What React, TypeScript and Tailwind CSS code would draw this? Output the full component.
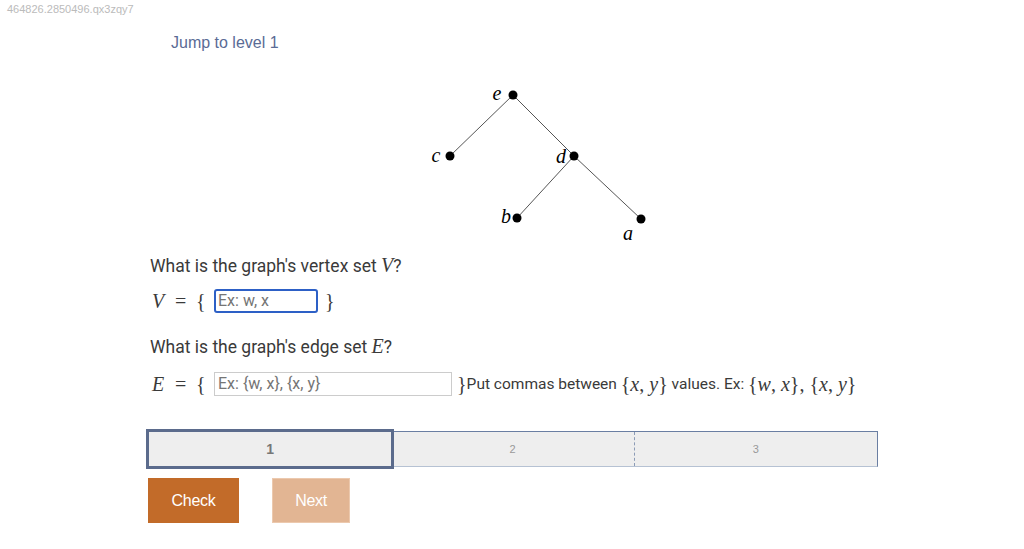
import React from "react";

const sans = { fontFamily: '"Liberation Sans", Arial, sans-serif' };
const roboto = { fontFamily: 'Roboto, "Liberation Sans", sans-serif' };
const serif = { fontFamily: '"Liberation Serif", "Times New Roman", serif' };

function M({ children, className = "" }: { children: React.ReactNode; className?: string }) {
  return (
    <span className={"text-[20px] " + className} style={serif}>
      {children}
    </span>
  );
}

function I({ children }: { children: React.ReactNode }) {
  return <span className="italic">{children}</span>;
}

export default function App() {
  return (
    <div className="min-h-[549px] bg-white text-[#3a3a3a]" style={roboto}>
      <div className="pl-[7px] pt-[3px] text-[11px] leading-[13px] text-[#bbbbbb]" style={sans}>
        464826.2850496.qx3zqy7
      </div>
      <div className="ml-[171px] mt-[17px] text-[16px] leading-[20px] text-[#5a6b95]" style={sans}>
        Jump to level 1
      </div>

      <svg width="240" height="170" className="block ml-[420px] mt-[27px]" style={serif}>
        <g stroke="#555555" strokeWidth="1">
          <line x1="93" y1="15" x2="30" y2="76" />
          <line x1="93" y1="15" x2="154" y2="76" />
          <line x1="154" y1="76" x2="97" y2="138" />
          <line x1="154" y1="76" x2="221" y2="139" />
        </g>
        <g fill="#000000">
          <circle cx="93" cy="15" r="4.5" />
          <circle cx="30" cy="76" r="4.5" />
          <circle cx="154" cy="76" r="4.5" />
          <circle cx="97" cy="138" r="4.5" />
          <circle cx="221" cy="139" r="4.5" />
        </g>
        <g fontSize="20" fontStyle="italic" fill="#000000" textAnchor="middle">
          <text x="77" y="20">e</text>
          <text x="16" y="82">c</text>
          <text x="141" y="83">d</text>
          <text x="86" y="143">b</text>
          <text x="208" y="160">a</text>
        </g>
      </svg>

      <div className="ml-[148px] pl-[2px]">
        <div className="mt-[3px] text-[17.5px] leading-[24px]">
          What is the graph's vertex set <M><I>V</I></M>?
        </div>
        <div className="mt-[11px] flex items-center h-[24px]">
          <M className="w-[23px] pl-[2px] leading-[24px]"><I>V</I></M>
          <M className="w-[23px] pl-[2px] leading-[24px]">=</M>
          <M className="w-[18px] leading-[24px]">{"{"}</M>
          <input
            placeholder="Ex: w, x"
            className="w-[104px] h-[24px] border-2 border-[#2d60c6] rounded-[3px] px-[2px] text-[16px] text-[#333] placeholder:text-[#757575] outline-none"
            style={roboto}
          />
          <M className="ml-[7px] leading-[24px]">{"}"}</M>
        </div>

        <div className="mt-[21px] text-[17.5px] leading-[24px]">
          What is the graph's edge set <M><I>E</I></M>?
        </div>
        <div className="mt-[13px] flex items-center h-[24px]">
          <M className="w-[23px] pl-[2px] leading-[24px]"><I>E</I></M>
          <M className="w-[23px] pl-[2px] leading-[24px]">=</M>
          <M className="w-[18px] leading-[24px]">{"{"}</M>
          <input
            placeholder="Ex: {w, x}, {x, y}"
            className="w-[238px] h-[24px] border border-[#cccccc] px-[3px] text-[16px] text-[#333] placeholder:text-[#757575] outline-none"
            style={roboto}
          />
          <M className="ml-[5px] leading-[24px]">{"}"}</M>
          <span className="text-[15.5px] leading-[24px] whitespace-pre">Put commas between </span>
          <M className="leading-[24px]">
            {"{"}<I>x</I>, <I>y</I>{"}"}
          </M>
          <span className="text-[15.5px] leading-[24px] whitespace-pre"> values. Ex: </span>
          <M className="leading-[24px]">
            {"{"}<I>w</I>, <I>x</I>{"}"}, {"{"}<I>x</I>, <I>y</I>{"}"}
          </M>
        </div>
      </div>

      <div
        className="ml-[148px] mt-[35px] w-[730px] h-[36px] flex border border-[#6a7ea2] border-b-[#b6c2d3] bg-[#eeeeee]"
        style={sans}
      >
        <div className="flex-1 flex items-center justify-center outline-[3px] outline-solid outline-[#5b6b8c] text-[14px] font-bold text-[#777777]">
          1
        </div>
        <div className="flex-1 flex items-center justify-center text-[11px] text-[#999999]">2</div>
        <div className="flex-1 flex items-center justify-center text-[11px] text-[#999999] border-l border-dashed border-l-[#8b9bb6]">
          3
        </div>
      </div>

      <div className="ml-[148px] mt-[11px] flex gap-[33px]" style={sans}>
        <button className="w-[91px] h-[45px] bg-[#c26b29] text-white text-[16px] tracking-[-0.3px]">Check</button>
        <button className="w-[78px] h-[45px] bg-[#e2b593] border border-[#ecc9ae] text-white text-[16px] tracking-[-0.3px]">
          Next
        </button>
      </div>
    </div>
  );
}
